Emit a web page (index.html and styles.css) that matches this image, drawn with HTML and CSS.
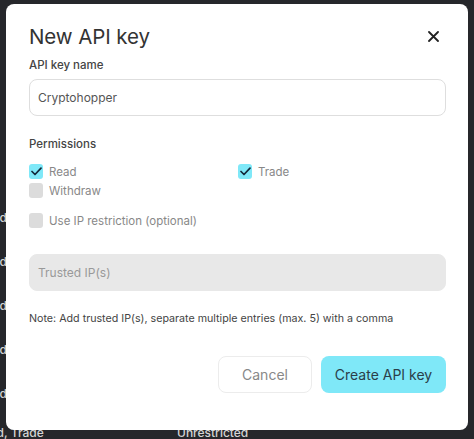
FILE: index.html
```html
<!DOCTYPE html>
<html>
<head>
<meta charset="utf-8">
<link rel="stylesheet" href="styles.css">
</head>
<body>
<div class="page">
  <div class="bg-rows">
    <div class="bg-row"><span class="bg-perm">Read</span><span class="bg-ip">Unrestricted</span></div>
    <div class="bg-row"><span class="bg-perm">Read</span><span class="bg-ip">Unrestricted</span></div>
    <div class="bg-row"><span class="bg-perm">Read</span><span class="bg-ip">Unrestricted</span></div>
    <div class="bg-row"><span class="bg-perm">Read</span><span class="bg-ip">Unrestricted</span></div>
    <div class="bg-row"><span class="bg-perm">Read</span><span class="bg-ip">Unrestricted</span></div>
    <div class="bg-row bg-last"><span class="bg-perm2">Read, Trade</span><span class="bg-ip">Unrestricted</span></div>
  </div>

  <div class="modal">
    <div class="modal-head">
      <h1 class="title">New API key</h1>
      <span class="close">
        <svg width="11" height="11" viewBox="0 0 11 11"><path d="M1 1 L10 10 M10 1 L1 10" stroke="#222" stroke-width="1.8" stroke-linecap="round"/></svg>
      </span>
    </div>

    <div class="label">API key name</div>
    <div class="input">Cryptohopper</div>

    <div class="label perm-label">Permissions</div>
    <div class="perm-grid">
      <div class="check"><span class="box on"><svg width="11" height="9" viewBox="0 0 11 9"><path d="M1 4.5 L4 7.5 L10 1.2" fill="none" stroke="#14283a" stroke-width="1.7" stroke-linecap="round" stroke-linejoin="round"/></svg></span>Read</div>
      <div class="check"><span class="box on"><svg width="11" height="9" viewBox="0 0 11 9"><path d="M1 4.5 L4 7.5 L10 1.2" fill="none" stroke="#14283a" stroke-width="1.7" stroke-linecap="round" stroke-linejoin="round"/></svg></span>Trade</div>
      <div class="check"><span class="box"></span>Withdraw</div>
    </div>
    <div class="check ip-check"><span class="box"></span>Use IP restriction (optional)</div>

    <div class="input disabled">Trusted IP(s)</div>
    <div class="note">Note: Add trusted IP(s), separate multiple entries (max. 5) with a comma</div>

    <div class="actions">
      <button class="btn cancel">Cancel</button>
      <button class="btn create">Create API key</button>
    </div>
  </div>
</div>
</body>
</html>
```

FILE: styles.css
```css
* { box-sizing: border-box; }
html, body { margin: 0; padding: 0; }
body {
  width: 474px;
  height: 439px;
  overflow: hidden;
  background: #26272b;
  font-family: Inter, "Noto Sans", sans-serif;
}
.page { position: relative; width: 474px; height: 439px; overflow: hidden; }

.bg-rows { padding-top: 196px; }
.bg-row {
  height: 44px;
  display: flex;
  align-items: center;
  color: #d4d4d4;
  font-size: 12px;
  font-weight: 500;
  line-height: 14px;
}
.bg-perm { margin-left: -22px; width: 199px; }
.bg-perm2 { margin-left: -25px; width: 202px; }
.bg-last { height: 24px; align-items: flex-start; padding-top: 10px; }

.modal {
  position: absolute;
  left: 6px;
  top: 4px;
  width: 462px;
  height: 426px;
  background: #fff;
  border-radius: 8px;
  padding: 20px 22px 0 23px;
  color: #333;
}
.modal-head {
  display: flex;
  justify-content: space-between;
  align-items: center;
  height: 24px;
}
.title {
  margin: 0;
  font-size: 20.5px;
  font-weight: 400;
  color: #333;
  letter-spacing: -0.1px;
}
.close { display: flex; margin-right: 7px; }

.label {
  font-size: 11.5px;
  font-weight: 500;
  color: #444;
  margin-top: 10px;
  line-height: 14px;
}
.input {
  margin-top: 7px;
  height: 37px;
  border: 1px solid #dedede;
  border-radius: 8px;
  display: flex;
  align-items: center;
  padding-left: 8px;
  font-size: 12px;
  color: #555;
}
.perm-label { margin-top: 21px; }

.perm-grid {
  display: grid;
  grid-template-columns: 209px 1fr;
  row-gap: 4px;
  margin-top: 13px;
}
.check {
  display: flex;
  align-items: center;
  gap: 6px;
  font-size: 11.5px;
  color: #888;
  height: 15px;
}
.box {
  width: 14px;
  height: 15px;
  border-radius: 3px;
  background: #dcdcdc;
  display: flex;
  align-items: center;
  justify-content: center;
  flex: none;
}
.box.on { background: #7fe8f8; }
.ip-check { margin-top: 15px; }

.input.disabled {
  margin-top: 26px;
  border-color: #e8e8e8;
  background: #e8e8e8;
  color: #999;
}
.note {
  margin-top: 21px;
  font-size: 10.7px;
  color: #444;
  line-height: 14px;
}
.actions {
  display: flex;
  justify-content: flex-end;
  gap: 9px;
  margin-top: 30px;
}
.btn {
  font-family: inherit;
  font-size: 14px;
  height: 37px;
  border-radius: 8px;
  cursor: pointer;
}
.cancel {
  width: 94px;
  background: #fff;
  border: 1px solid #ececec;
  color: #888;
}
.create {
  width: 125px;
  background: #7fe8f8;
  border: none;
  color: #2b3e4a;
}
```
